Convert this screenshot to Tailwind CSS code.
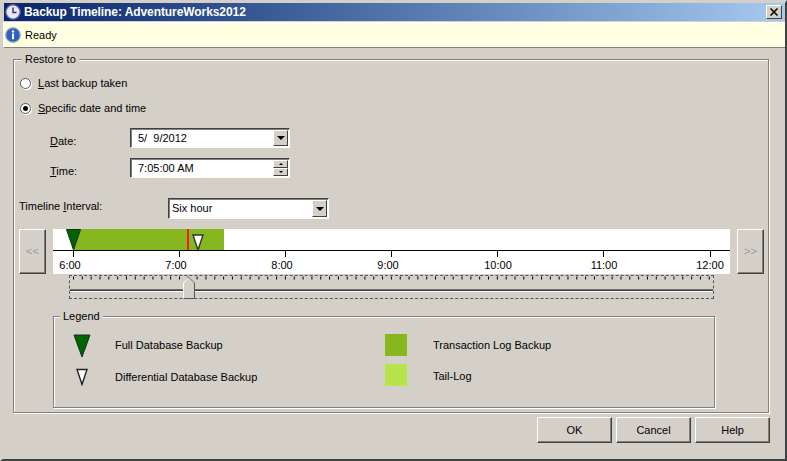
<!DOCTYPE html>
<html lang="en">
  <head>
    <meta charset="UTF-8" />
    <script src="https://cdn.jsdelivr.net/npm/@tailwindcss/browser@4"></script>
    <title>Backup Timeline</title>
  </head>
  <body class="m-0 bg-[#d4d0c8]">
    <!-- window frame -->
    <div class="w-[787px] h-[461px] overflow-hidden bg-[#d4d0c8] border-r-[2px] border-b-[2px] border-t-[3px] border-l-[3px] border-r-[#404040] border-b-[#404040] border-t-[#d4d0c8] border-l-[#d4d0c8] font-['Liberation_Sans',sans-serif] text-[11px] text-black relative">
      <!-- title bar -->
      <div class="ml-[1px] h-[18px] flex items-center pl-[1px] pr-[3px] bg-gradient-to-r from-[#0a246a] to-[#a6caf0]">
        <svg width="16" height="16" viewBox="0 0 16 16" class="shrink-0">
          <circle cx="8" cy="8" r="7.2" fill="#e8e8f8" stroke="#5a5fa8" stroke-width="1.4" />
          <path d="M8 3.5V8.5H11.5" fill="none" stroke="#303070" stroke-width="1.4" />
        </svg>
        <span class="ml-[3px] text-white font-bold text-[12px] tracking-[-0.08px]">Backup Timeline: AdventureWorks2012</span>
        <div class="ml-auto w-[16px] h-[14px] bg-[#d4d0c8] border border-t-white border-l-white border-r-[#404040] border-b-[#404040] flex items-center justify-center">
          <svg width="8" height="8" viewBox="0 0 8 8"><path d="M0.5 0.5L7.5 7.5M7.5 0.5L0.5 7.5" stroke="#000" stroke-width="1.5" /></svg>
        </div>
      </div>

      <!-- info bar -->
      <div class="mt-[1px] h-[26px] bg-[#ffffe1] border-t border-t-white border-b border-b-[#808080] border-l border-l-white flex items-center pl-[1px]">
        <svg width="16" height="16" viewBox="0 0 16 16" class="shrink-0">
          <circle cx="8" cy="8" r="7.2" fill="#2f62c0" stroke="#8a9cc4" stroke-width="1.2" />
          <circle cx="8" cy="4.4" r="1.2" fill="#fff" />
          <path d="M8 6.6V12.2" stroke="#fff" stroke-width="2" />
        </svg>
        <span class="ml-[4px]">Ready</span>
      </div>

      <!-- restore to group -->
      <div class="relative ml-[10px] mt-[11px] w-[756px] h-[354px] border border-[#808080] shadow-[inset_1px_1px_0_#fff,1px_1px_0_#fff]">
        <span class="absolute left-[8px] -top-[7px] bg-[#d4d0c8] px-[3px] leading-[13px]">Restore to</span>

        <div class="pl-[5px] pt-[17px]">
          <label class="flex items-center h-[13px]">
            <span class="ml-[1px] w-[11px] h-[11px] rounded-full bg-white border border-[#555] shadow-[1px_1px_0_#fff] shrink-0"></span>
            <span class="ml-[7px]"><u>L</u>ast backup taken</span>
          </label>
          <label class="flex items-center h-[13px] mt-[12px]">
            <span class="ml-[1px] w-[11px] h-[11px] rounded-full bg-white border border-[#555] shadow-[1px_1px_0_#fff] shrink-0 flex items-center justify-center">
              <span class="w-[5px] h-[5px] rounded-full bg-black"></span>
            </span>
            <span class="ml-[7px]"><u>S</u>pecific date and time</span>
          </label>

          <div class="flex items-center mt-[13px] h-[20px]">
            <span class="w-[80px] ml-[31px] pt-[6px]"><u>D</u>ate:</span>
            <div class="w-[160px] h-[20px] bg-white border border-t-[#404040] border-l-[#404040] border-r-white border-b-white shadow-[inset_1px_1px_0_#808080] flex items-center pl-[7px] pr-[1px]">
              <span>5/&nbsp; 9/2012</span>
              <div class="ml-auto w-[15px] h-[16px] bg-[#d4d0c8] border border-t-white border-l-white border-r-[#404040] border-b-[#404040] flex items-center justify-center">
                <span class="w-0 h-0 border-x-[4px] border-x-transparent border-t-[4px] border-t-black"></span>
              </div>
            </div>
          </div>
          <div class="flex items-center mt-[10px] h-[20px]">
            <span class="w-[80px] ml-[31px] pt-[6px]"><u>T</u>ime:</span>
            <div class="w-[160px] h-[20px] bg-white border border-t-[#404040] border-l-[#404040] border-r-white border-b-white shadow-[inset_1px_1px_0_#808080] flex items-center pl-[7px] pr-[1px]">
              <span>7:05:00 AM</span>
              <div class="ml-auto w-[15px] h-[16px] flex flex-col">
                <div class="h-[8px] bg-[#d4d0c8] border border-t-white border-l-white border-r-[#404040] border-b-[#404040] flex items-center justify-center">
                  <span class="w-0 h-0 border-x-[2px] border-x-transparent border-b-[2px] border-b-black"></span>
                </div>
                <div class="h-[8px] bg-[#d4d0c8] border border-t-white border-l-white border-r-[#404040] border-b-[#404040] flex items-center justify-center">
                  <span class="w-0 h-0 border-x-[2px] border-x-transparent border-t-[2px] border-t-black"></span>
                </div>
              </div>
            </div>
          </div>

          <div class="flex items-center mt-[20px] h-[21px]">
            <span class="w-[149px] pb-[5px]">Timeline <u>I</u>nterval:</span>
            <div class="w-[161px] h-[21px] bg-white border border-t-[#404040] border-l-[#404040] border-r-white border-b-white shadow-[inset_1px_1px_0_#808080] flex items-center pl-[3px] pr-[1px]">
              <span>Six hour</span>
              <div class="ml-auto w-[15px] h-[17px] bg-[#d4d0c8] border border-t-white border-l-white border-r-[#404040] border-b-[#404040] flex items-center justify-center">
                <span class="w-0 h-0 border-x-[4px] border-x-transparent border-t-[4px] border-t-black"></span>
              </div>
            </div>
          </div>

          <!-- timeline row -->
          <div class="flex mt-[10px] h-[45px]">
            <div class="w-[27px] bg-[#d4d0c8] border border-t-white border-l-white border-r-[#404040] border-b-[#404040] shadow-[inset_-1px_-1px_0_#808080] flex items-center justify-center text-[#9a9a9a]">&lt;&lt;</div>
            <div class="relative ml-[7px] w-[677px] h-[45px] bg-white">
              <div class="absolute left-[20px] top-0 w-[151px] h-[21px] bg-[#86b71f]"></div>
              <div class="absolute left-0 right-0 top-[21px] h-[1px] bg-black"></div>
              <svg class="absolute left-0 top-[21px]" width="677" height="7" viewBox="0 0 677 7">
                <path d="M20.5 0V7M126.5 0V7M232.5 0V7M338.5 0V7M444.5 0V7M550.5 0V7M657.5 0V7" stroke="#000" />
              </svg>
              <div class="absolute left-[134px] top-0 w-[2px] h-[21px] bg-[#ee1c1c]"></div>
              <svg class="absolute left-[13px] top-0" width="15" height="22" viewBox="0 0 15 22"><path d="M0.5 0.5H14.5L7.5 21Z" fill="#006400" stroke="#1c2a1c" /></svg>
              <svg class="absolute left-[139px] top-[5px]" width="12" height="18" viewBox="0 0 12 18"><path d="M1 1H11L6 16Z" fill="#fff" stroke="#333" stroke-width="1.4" /></svg>
              <span class="absolute left-[2px] top-[28px] w-[30px] text-center">6:00</span>
              <span class="absolute left-[108px] top-[28px] w-[30px] text-center">7:00</span>
              <span class="absolute left-[214px] top-[28px] w-[30px] text-center">8:00</span>
              <span class="absolute left-[320px] top-[28px] w-[30px] text-center">9:00</span>
              <span class="absolute left-[428px] top-[28px] w-[34px] text-center">10:00</span>
              <span class="absolute left-[534px] top-[28px] w-[34px] text-center">11:00</span>
              <span class="absolute left-[640px] top-[28px] w-[34px] text-center">12:00</span>
            </div>
            <div class="ml-[7px] w-[27px] bg-[#d4d0c8] border border-t-white border-l-white border-r-[#404040] border-b-[#404040] shadow-[inset_-1px_-1px_0_#808080] flex items-center justify-center text-[#9a9a9a]">&gt;&gt;</div>
          </div>

          <!-- slider -->
          <div class="relative ml-[50px] mt-[1px] w-[645px] h-[24px] border border-dashed border-[#555]">
            <svg class="absolute left-0 top-0" width="643" height="4" viewBox="0 0 643 4">
              <line x1="3" x2="643" y1="2" y2="2" stroke="#000" stroke-width="3" stroke-dasharray="1 7.83" />
            </svg>
            <div class="absolute left-0 right-0 top-[13px] h-[2px] bg-[#707070] border-b border-b-[#404040]"></div>
            <div class="absolute left-0 right-0 top-[15px] h-[1px] bg-white"></div>
            <svg class="absolute left-[113px] top-[1px]" width="12" height="22" viewBox="0 0 12 22">
              <path d="M0.5 6L6 0.5L11.5 6V21.5H0.5Z" fill="#d4d0c8" stroke="#fff" />
              <path d="M6 0.5L11.5 6V21.5H0.5" fill="none" stroke="#555" />
            </svg>
          </div>

          <!-- legend group -->
          <div class="relative ml-[34px] mt-[17px] w-[662px] h-[92px] border border-[#808080] shadow-[inset_1px_1px_0_#fff,1px_1px_0_#fff]">
            <span class="absolute left-[6px] -top-[7px] bg-[#d4d0c8] px-[3px] leading-[13px]">Legend</span>
            <div class="flex pl-[19px] pt-[17px]">
              <div class="w-[312px]">
                <div class="flex items-center h-[24px]">
                  <svg width="18" height="24" viewBox="0 0 18 24" class="shrink-0"><path d="M1 1H17L9 23Z" fill="#006400" stroke="#1c2a1c" /></svg>
                  <span class="ml-[24px] pb-[2px]">Full Database Backup</span>
                </div>
                <div class="flex items-center h-[20px] mt-[9px]">
                  <span class="w-[18px] flex justify-center shrink-0">
                    <svg width="12" height="18" viewBox="0 0 12 18"><path d="M1 1.5H11L6 16.5Z" fill="#fff" stroke="#222" stroke-width="1.4" /></svg>
                  </span>
                  <span class="ml-[24px]">Differential Database Backup</span>
                </div>
              </div>
              <div>
                <div class="flex items-center h-[22px]">
                  <span class="w-[22px] h-[22px] bg-[#86b71f] shrink-0"></span>
                  <span class="ml-[26px]">Transaction Log Backup</span>
                </div>
                <div class="flex items-center h-[22px] mt-[8px]">
                  <span class="w-[22px] h-[22px] bg-[#b7e34d] shrink-0"></span>
                  <span class="ml-[26px] pt-[2px]">Tail-Log</span>
                </div>
              </div>
            </div>
          </div>
        </div>
      </div>

      <!-- dialog buttons -->
      <div class="flex justify-end gap-[4px] mt-[4px] pr-[15px]">
        <button class="w-[75px] h-[26px] bg-[#d4d0c8] border border-t-white border-l-white border-r-[#404040] border-b-[#404040] shadow-[inset_-1px_-1px_0_#808080]">OK</button>
        <button class="w-[75px] h-[26px] bg-[#d4d0c8] border border-t-white border-l-white border-r-[#404040] border-b-[#404040] shadow-[inset_-1px_-1px_0_#808080]">Cancel</button>
        <button class="w-[75px] h-[26px] bg-[#d4d0c8] border border-t-white border-l-white border-r-[#404040] border-b-[#404040] shadow-[inset_-1px_-1px_0_#808080]">Help</button>
      </div>
    </div>
  </body>
</html>
